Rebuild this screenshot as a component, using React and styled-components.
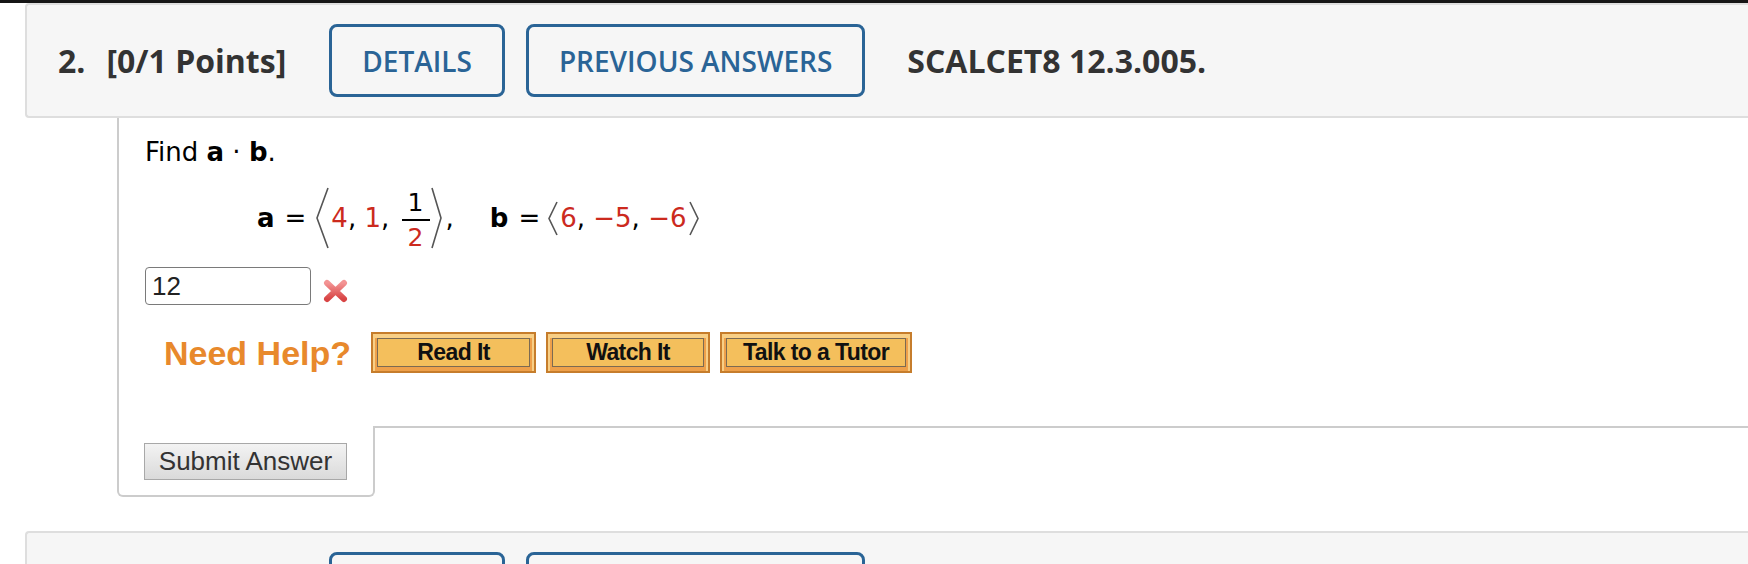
import React from "react";
import styled, { createGlobalStyle } from "styled-components";

const GlobalStyle = createGlobalStyle`
  html, body {
    margin: 0;
    padding: 0;
    background: #fff;
    overflow: hidden;
  }
  body {
    font-family: "DejaVu Sans", Verdana, sans-serif;
  }
`;

const TopRule = styled.div`
  height: 3px;
  background: #161616;
`;

const Header = styled.div`
  box-sizing: border-box;
  height: 115px;
  margin-left: 25px;
  margin-top: ${(p) => p.$gap || 0}px;
  display: flex;
  align-items: center;
  padding-left: 31px;
  background: #f6f6f6;
  border: 2px solid #dedede;
  border-right: none;
  border-radius: 4px 0 0 4px;
`;

const QNum = styled.span`
  font: 700 32px "Open Sans", sans-serif;
  color: #333;
`;

const Points = styled(QNum)`
  margin-left: 21px;
`;

const OutlineBtn = styled.button`
  box-sizing: border-box;
  height: 73px;
  padding: 0 30px;
  margin-left: ${(p) => p.$ml}px;
  border: 3px solid #2a6496;
  border-radius: 8px;
  background: transparent;
  font: 600 28px "Open Sans", sans-serif;
  color: #2a6496;
  white-space: nowrap;
`;

const Code = styled(QNum)`
  margin-left: 42px;
`;

const Content = styled.div`
  margin-left: 117px;
`;

const Body = styled.div`
  border-left: 2px solid #ccc;
  padding: 19px 0 53px 26px;
`;

const Prompt = styled.div`
  font-size: 26px;
  line-height: 30px;
  color: #000;
`;

const Bold = styled.b`
  font-weight: 700;
`;

const Formula = styled.div`
  display: flex;
  align-items: center;
  height: 62px;
  margin: 20px 0 0 112px;
  font-size: 26px;
  line-height: 30px;
  color: #000;
  white-space: pre;
`;

const Var = styled.span`
  font-weight: 700;
  margin-left: ${(p) => p.$ml || 0}px;
`;

const Eq = styled.span`
  margin-left: 10px;
`;

const Red = styled.span`
  color: #cc2a1e;
  margin-left: ${(p) => p.$ml || 0}px;
`;

const Sep = styled.span`
  margin-left: ${(p) => p.$ml || 0}px;
`;

const AngleSvg = styled.svg`
  display: block;
  flex: none;
  margin-left: ${(p) => p.$ml || 0}px;
`;

const Frac = styled.span`
  display: flex;
  flex-direction: column;
  align-items: center;
  width: 28px;
  margin: 4px 0 0 4px;
  font-size: 25px;
  line-height: 25px;
`;

const FracBar = styled.span`
  align-self: stretch;
  height: 2px;
  margin: 4px 0 4px;
  background: #000;
`;

const AnswerRow = styled.div`
  display: flex;
  align-items: center;
  margin-top: 18px;
`;

const AnswerInput = styled.input`
  box-sizing: border-box;
  width: 166px;
  height: 38px;
  padding: 0 6px;
  border: 1.5px solid #7a7a7a;
  border-radius: 4px;
  font: 26px "Liberation Sans", Arial, sans-serif;
  color: #222;
  background: #fff;
  outline: none;
`;

const WrongMark = styled.svg`
  display: block;
  margin: 10px 0 0 11px;
`;

const HelpRow = styled.div`
  display: flex;
  align-items: center;
  height: 41px;
  margin-top: 27px;
  padding-left: 19px;
`;

const NeedHelp = styled.span`
  margin-right: 20px;
  font: 700 34px/36px "Liberation Sans", Arial, sans-serif;
  color: #e8892c;
  white-space: nowrap;
`;

const HelpBtn = styled.button`
  box-sizing: border-box;
  width: ${(p) => p.$w}px;
  height: 41px;
  margin-right: 10px;
  padding: 0;
  border: 2px solid #c67d2c;
  background: #f4bf5c;
  box-shadow: inset 0 2px 0 2px #f8cf86, inset 0 0 0 4px #eea04a,
    inset 0 0 0 5px #7c6a52;
  font: 700 23px "Liberation Sans", Arial, sans-serif;
  color: #111;
  letter-spacing: -0.6px;
`;

const Footer = styled.div`
  display: flex;
`;

const SubmitBox = styled.div`
  box-sizing: border-box;
  width: 258px;
  padding: 17px 0 15px 25px;
  border: 2px solid #ccc;
  border-top: none;
  border-radius: 0 0 6px 6px;
`;

const Filler = styled.div`
  flex: 1;
  border-top: 2px solid #ccc;
`;

const SubmitBtn = styled.button`
  display: block;
  box-sizing: border-box;
  width: 203px;
  height: 37px;
  padding: 0;
  border: 1px solid #a8a8a8;
  background: linear-gradient(#f3f3f3, #dadada);
  font: 26px "Liberation Sans", Arial, sans-serif;
  color: #333;
`;

const Angle = ({ dir, w, h, ml }) => (
  <AngleSvg $ml={ml} width={w} height={h} viewBox={`0 0 ${w} ${h}`}>
    <polyline
      points={
        dir === "l"
          ? `${w - 2},1 2,${h / 2} ${w - 2},${h - 1}`
          : `2,1 ${w - 2},${h / 2} 2,${h - 1}`
      }
      fill="none"
      stroke="#555"
      strokeWidth="1.6"
    />
  </AngleSvg>
);

const QuestionHeader = ({ num, points, code, gap }) => (
  <Header $gap={gap}>
    <QNum>{num}</QNum>
    <Points>{points}</Points>
    <OutlineBtn $ml={43}>DETAILS</OutlineBtn>
    <OutlineBtn $ml={21}>PREVIOUS ANSWERS</OutlineBtn>
    <Code>{code}</Code>
  </Header>
);

export default function App() {
  return (
    <>
      <GlobalStyle />
      <TopRule />
      <QuestionHeader num="2." points="[0/1 Points]" code="SCALCET8 12.3.005." />
      <Content>
        <Body>
          <Prompt>
            Find <Bold>a</Bold> · <Bold>b</Bold>.
          </Prompt>
          <Formula>
            <Var>a</Var>
            <Eq>=</Eq>
            <Angle dir="l" w={15} h={62} ml={9} />
            <Red $ml={1}>4</Red>
            <Sep>, </Sep>
            <Red>1</Red>
            <Sep>, </Sep>
            <Frac>
              <span>1</span>
              <FracBar />
              <Red>2</Red>
            </Frac>
            <Angle dir="r" w={13} h={62} />
            <Sep $ml={3}>,</Sep>
            <Var $ml={36}>b</Var>
            <Eq>=</Eq>
            <Angle dir="l" w={12} h={35} ml={7} />
            <Red $ml={1}>6</Red>
            <Sep>, </Sep>
            <Red>−5</Red>
            <Sep>, </Sep>
            <Red>−6</Red>
            <Angle dir="r" w={12} h={35} ml={2} />
          </Formula>
          <AnswerRow>
            <AnswerInput defaultValue="12" readOnly />
            <WrongMark width="27" height="24" viewBox="0 0 27 24">
              <defs>
                <linearGradient id="wrongGrad" x1="0" y1="0" x2="0" y2="1">
                  <stop offset="0" stopColor="#f39494" />
                  <stop offset="1" stopColor="#d84444" />
                </linearGradient>
              </defs>
              <path
                d="M5 4 L22 20 M22 4 L5 20"
                stroke="url(#wrongGrad)"
                strokeWidth="6"
                strokeLinecap="round"
                fill="none"
              />
            </WrongMark>
          </AnswerRow>
          <HelpRow>
            <NeedHelp>Need Help?</NeedHelp>
            <HelpBtn $w={165}>Read It</HelpBtn>
            <HelpBtn $w={164}>Watch It</HelpBtn>
            <HelpBtn $w={192}>Talk to a Tutor</HelpBtn>
          </HelpRow>
        </Body>
        <Footer>
          <SubmitBox>
            <SubmitBtn>Submit Answer</SubmitBtn>
          </SubmitBox>
          <Filler />
        </Footer>
      </Content>
      <QuestionHeader
        num="3."
        points="[0/1 Points]"
        code="SCALCET8 12.3.006."
        gap={34}
      />
    </>
  );
}
